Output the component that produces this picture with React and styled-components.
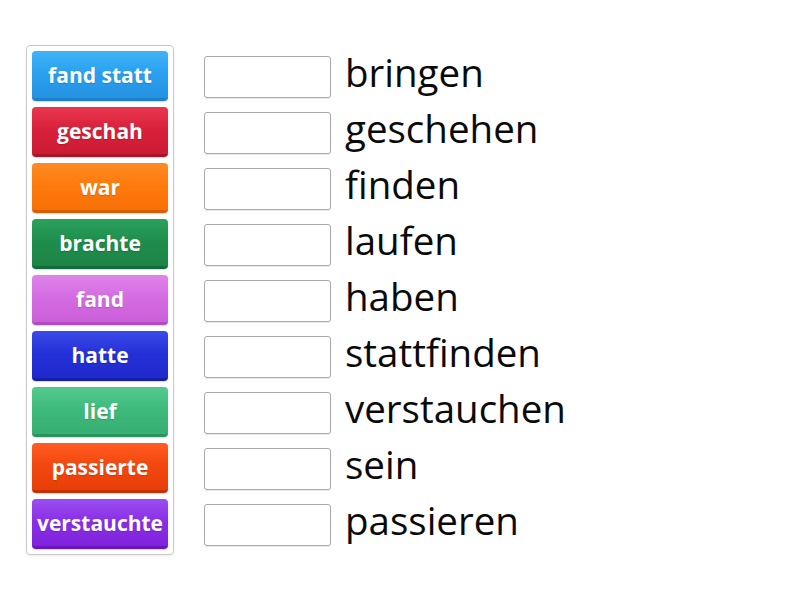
import React from "react";
import styled, { createGlobalStyle } from "styled-components";

const Global = createGlobalStyle`
  html, body { margin: 0; padding: 0; background: #fff; }
  body { font-family: "Open Sans", "Liberation Sans", sans-serif; }
`;

const Page = styled.div`
  display: flex;
  align-items: flex-start;
  gap: 30px;
  padding: 45px 0 0 26px;
  width: 800px;
  height: 600px;
  box-sizing: border-box;
`;

const Bank = styled.div`
  display: flex;
  flex-direction: column;
  gap: 6px;
  padding: 5px;
  border: 1px solid #c8c8c8;
  border-radius: 4px;
  box-shadow: 0 1px 2px rgba(0,0,0,0.08);
`;

const Tile = styled.div`
  width: 136px;
  height: 50px;
  box-sizing: border-box;
  border-radius: 4px;
  display: flex;
  align-items: center;
  justify-content: center;
  color: #fff;
  font-weight: 700;
  font-size: 21px;
  padding-bottom: 2px;
  white-space: nowrap;
  background: linear-gradient(to bottom, ${p => p.$top} 0%, ${p => p.$c} 45%, ${p => p.$bot} 100%);
  border-top: 2px solid ${p => p.$top};
  border-bottom: 3px solid ${p => p.$edge};
  box-shadow: 0 1px 1px rgba(0,0,0,0.15);
  text-shadow: 0 1px 1px rgba(0,0,0,0.15);
`;

const Targets = styled.div`
  display: flex;
  flex-direction: column;
  gap: 14px;
  padding-top: 11px;
`;

const Row = styled.div`
  display: flex;
  align-items: center;
  gap: 14px;
  height: 42px;
`;

const Slot = styled.div`
  width: 127px;
  height: 42px;
  box-sizing: border-box;
  border: 1px solid #a9a9a9;
  border-radius: 3px;
  background: #fff;
  box-shadow: 0 1px 1px rgba(0,0,0,0.1);
`;

const Word = styled.div`
  font-size: 38.5px;
  line-height: 42px;
  color: #0a0a0a;
  margin-top: -11px;
  white-space: nowrap;
`;

const tiles = [
  { t: "fand statt", top: "#3eb2f5", c: "#2a9ff0", bot: "#2593e0", edge: "#1f7fcc" },
  { t: "geschah", top: "#e8364e", c: "#d8203a", bot: "#cc1c34", edge: "#a8142a" },
  { t: "war", top: "#ff8a22", c: "#ff7a0c", bot: "#f77008", edge: "#d85e04" },
  { t: "brachte", top: "#2aa05c", c: "#1f8d4c", bot: "#1d8447", edge: "#146a38" },
  { t: "fand", top: "#de82ea", c: "#d46be2", bot: "#cb5ed9", edge: "#b24ac0" },
  { t: "hatte", top: "#3a48e6", c: "#2431d8", bot: "#2029cc", edge: "#161fa8" },
  { t: "lief", top: "#52c98c", c: "#3dba7b", bot: "#37ae72", edge: "#2a945e" },
  { t: "passierte", top: "#ff5a20", c: "#f2470e", bot: "#e83e08", edge: "#c43204" },
  { t: "verstauchte", top: "#9a4cf0", c: "#8a2ee6", bot: "#7f24dc", edge: "#6a16c0" },
];

const words = ["bringen", "geschehen", "finden", "laufen", "haben", "stattfinden", "verstauchen", "sein", "passieren"];

export default function App() {
  return (
    <>
      <Global />
      <Page>
        <Bank>
          {tiles.map(x => (
            <Tile key={x.t} $top={x.top} $c={x.c} $bot={x.bot} $edge={x.edge}>{x.t}</Tile>
          ))}
        </Bank>
        <Targets>
          {words.map(w => (
            <Row key={w}>
              <Slot />
              <Word>{w}</Word>
            </Row>
          ))}
        </Targets>
      </Page>
    </>
  );
}
